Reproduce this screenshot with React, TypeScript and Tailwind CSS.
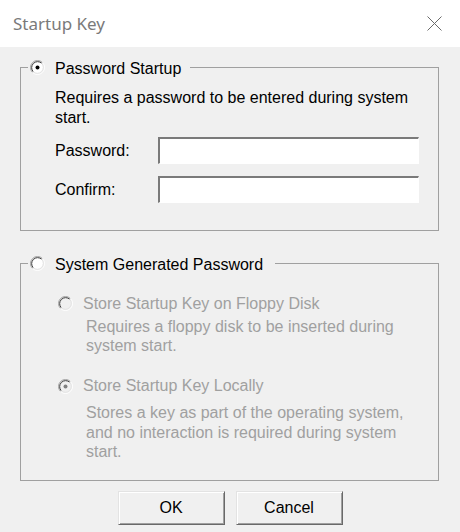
import React from "react";

function Radio({ checked, disabled, cls }: { checked?: boolean; disabled?: boolean; cls?: string }) {
  return (
    <svg width="15" height="15" viewBox="0 0 15 15" className={`shrink-0 ${cls ?? ""}`}>
      <circle cx="7.5" cy="7.5" r="5.5" fill={disabled ? "#f0f0f0" : "#ffffff"} />
      <path d="M 2.55 12.45 A 7 7 0 0 1 12.45 2.55" fill="none" stroke="#a0a0a0" strokeWidth="1" />
      <path d="M 12.45 2.55 A 7 7 0 0 1 2.55 12.45" fill="none" stroke="#ffffff" strokeWidth="1" />
      <path d="M 3.26 11.74 A 6 6 0 0 1 11.74 3.26" fill="none" stroke="#404040" strokeWidth="1" />
      <path d="M 11.74 3.26 A 6 6 0 0 1 3.26 11.74" fill="none" stroke="#e3e3e3" strokeWidth="1" />
      {checked && <circle cx="7.5" cy="7.5" r="2" fill={disabled ? "#808080" : "#000000"} />}
    </svg>
  );
}

function Field({ label, mt }: { label: string; mt: string }) {
  return (
    <div className={`flex items-center ${mt}`}>
      <span className="w-[103px] leading-[20px]">{label}</span>
      <input
        type="password"
        className="w-[261px] h-[27px] bg-white border-t-2 border-l-2 border-r border-b border-t-[#7a7a7a] border-l-[#7a7a7a] border-r-[#ffffff] border-b-[#ffffff] outline-none"
      />
    </div>
  );
}

function Button({ children }: { children: React.ReactNode }) {
  return (
    <button className="w-[107px] h-[34px] bg-[#f0f0f0] border border-t-[#e3e3e3] border-l-[#e3e3e3] border-r-[#696969] border-b-[#696969] shadow-[inset_1px_1px_0_#ffffff,inset_-1px_-1px_0_#a0a0a0] text-[16px] text-black leading-none">
      {children}
    </button>
  );
}

export default function App() {
  return (
    <div className="w-[460px] h-[532px] bg-[#f0f0f0] overflow-hidden text-[16px] text-black" style={{ fontFamily: '"Liberation Sans", Arial, sans-serif' }}>
      <div className="h-[47px] bg-white flex items-center justify-between pl-[13px] pr-[18px]">
        <span className="text-[17px] text-[#7a7a7a]" style={{ fontFamily: '"Noto Sans", sans-serif' }}>
          Startup Key
        </span>
        <svg width="15" height="15" viewBox="0 0 15 15">
          <path d="M0.5 0.5 L14.5 14.5 M14.5 0.5 L0.5 14.5" stroke="#6a6a6a" strokeWidth="1" />
        </svg>
      </div>

      <div className="pl-[20px] pr-[21px]">
        <fieldset className="mt-[10px] border border-[#a0a0a0] p-0 m-0 min-w-0">
          <legend className="ml-[7px] pl-[2px] pr-[9px] flex items-start h-[20px]">
            <Radio checked cls="mt-[3px]" />
            <span className="ml-[10px] mt-[2px] leading-[20px]">Password Startup</span>
          </legend>
          <div className="pl-[34px] pt-[10px] pb-[27px]">
            <div className="leading-[20px] pt-[1px]">
              Requires a password to be entered during system
              <br />
              start.
            </div>
            <Field label="Password:" mt="mt-[9px]" />
            <Field label="Confirm:" mt="mt-[12px]" />
          </div>
        </fieldset>

        <fieldset className="mt-[22px] border border-[#a0a0a0] p-0 m-0 min-w-0">
          <legend className="ml-[7px] pl-[2px] pr-[12px] flex items-start h-[20px]">
            <Radio cls="mt-[3px]" />
            <span className="ml-[10px] mt-[2px] leading-[20px]">System Generated Password</span>
          </legend>
          <div className="pl-[37px] pt-[20px] pb-[18px] text-[#a0a0a0]">
            <div className="flex items-center h-[20px] leading-[20px] pt-[1px]">
              <Radio disabled />
              <span className="ml-[10px]">Store Startup Key on Floppy Disk</span>
            </div>
            <div className="ml-[28px] mt-[4px] leading-[19px]">
              Requires a floppy disk to be inserted during
              <br />
              system start.
            </div>
            <div className="flex items-center h-[20px] leading-[20px] mt-[21px]">
              <Radio checked disabled />
              <span className="ml-[10px]">Store Startup Key Locally</span>
            </div>
            <div className="ml-[28px] mt-[7px] leading-[19.5px]">
              Stores a key as part of the operating system,
              <br />
              and no interaction is required during system
              <br />
              start.
            </div>
          </div>
        </fieldset>
      </div>

      <div className="flex justify-center gap-[11px] mt-[10px]">
        <Button>OK</Button>
        <Button>Cancel</Button>
      </div>
    </div>
  );
}
